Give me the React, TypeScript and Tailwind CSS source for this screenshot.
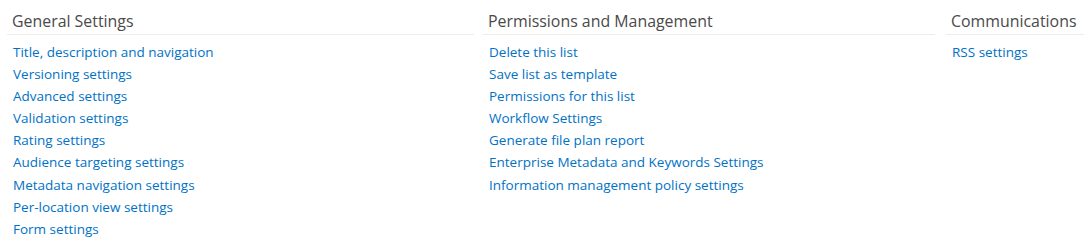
import React from 'react';

const sections = [
  {
    title: 'General Settings',
    width: 'w-[467px]',
    links: [
      'Title, description and navigation',
      'Versioning settings',
      'Advanced settings',
      'Validation settings',
      'Rating settings',
      'Audience targeting settings',
      'Metadata navigation settings',
      'Per-location view settings',
      'Form settings',
    ],
  },
  {
    title: 'Permissions and Management',
    width: 'w-[452px] ml-[9px]',
    links: [
      'Delete this list',
      'Save list as template',
      'Permissions for this list',
      'Workflow Settings',
      'Generate file plan report',
      'Enterprise Metadata and Keywords Settings',
      'Information management policy settings',
    ],
  },
  {
    title: 'Communications',
    width: 'flex-1 ml-[11px]',
    links: ['RSS settings'],
  },
];

const App = () => {
  return (
    <div className="w-[1084px] h-[247px] bg-white flex pl-[7px] font-['Open_Sans',sans-serif] overflow-hidden">
      {sections.map((s) => (
        <div key={s.title} className={s.width}>
          <h3 className="pt-[11px] pb-[3px] px-[5px] text-[15.9px] leading-[20px] text-[#4a4a4a] border-b border-[#ececec] whitespace-nowrap">
            {s.title}
          </h3>
          <ul className="pt-[6px] px-[6px]">
            {s.links.map((l) => (
              <li key={l} className="text-[13.5px] leading-[22.1px] text-[#0072c6] whitespace-nowrap">
                <a href="#">{l}</a>
              </li>
            ))}
          </ul>
        </div>
      ))}
    </div>
  );
};

export default App;
